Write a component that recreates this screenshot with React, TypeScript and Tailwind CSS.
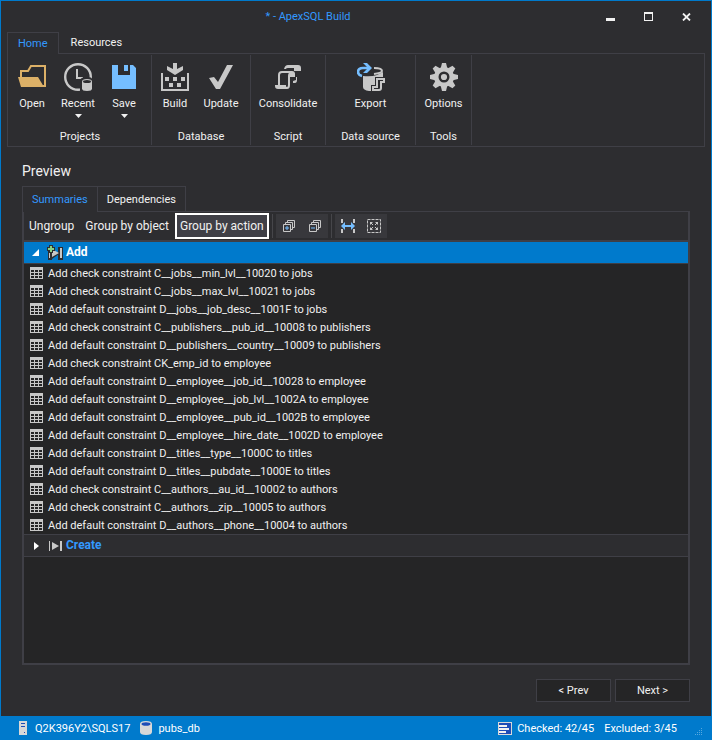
import { useState } from 'react';
import type { ReactNode } from 'react';
import clsx from 'clsx';

const constraints = [
  'Add check constraint C__jobs__min_lvl__10020 to jobs',
  'Add check constraint C__jobs__max_lvl__10021 to jobs',
  'Add default constraint D__jobs__job_desc__1001F to jobs',
  'Add check constraint C__publishers__pub_id__10008 to publishers',
  'Add default constraint D__publishers__country__10009 to publishers',
  'Add check constraint CK_emp_id to employee',
  'Add default constraint D__employee__job_id__10028 to employee',
  'Add default constraint D__employee__job_lvl__1002A to employee',
  'Add default constraint D__employee__pub_id__1002B to employee',
  'Add default constraint D__employee__hire_date__1002D to employee',
  'Add default constraint D__titles__type__1000C to titles',
  'Add default constraint D__titles__pubdate__1000E to titles',
  'Add check constraint C__authors__au_id__10002 to authors',
  'Add check constraint C__authors__zip__10005 to authors',
  'Add default constraint D__authors__phone__10004 to authors',
];

/* Ribbon icons, all on a 28px grid */
function RibbonIcon({ children }: { children: ReactNode }) {
  return (
    <svg width="28" height="28" viewBox="0 0 28 28" fill="#c8c8c8" aria-hidden="true" className="shrink-0">
      {children}
    </svg>
  );
}

const OpenIcon = () => (
  <RibbonIcon>
    <path d="M3 15V8H10L13 3H27V23H24" fill="none" stroke="#dcb067" strokeWidth="2" />
    <path d="M0 14H20L26 24H3Z" fill="#dcb067" />
  </RibbonIcon>
);

const RecentIcon = () => (
  <RibbonIcon>
    <circle cx="14" cy="14" r="12.8" fill="none" stroke="#c8c8c8" strokeWidth="2.4" />
    <path d="M13 6V15H19" fill="none" stroke="#c8c8c8" strokeWidth="2" />
    <path d="M16 28V18Q16 14 23 14Q28 14 28 16V28Z" fill="#2d2d30" />
    <path d="M18 18.5V25.5Q18 28 23 28Q28 28 28 25.5V18.5Q28 16 23 16Q18 16 18 18.5Z" />
    <ellipse cx="23" cy="18.6" rx="4" ry="1.5" fill="#2d2d30" />
  </RibbonIcon>
);

const SaveIcon = () => (
  <RibbonIcon>
    <path d="M2 2H8V12H20V2H23L26 5V26H2Z" fill="#75beff" />
    <path d="M14 2H18V8H14Z" fill="#75beff" />
  </RibbonIcon>
);

const BuildIcon = () => (
  <RibbonIcon>
    <path d="M1 10V27H27V10" fill="none" stroke="#c8c8c8" strokeWidth="2" />
    <path d="M12 0H16V6L22 3V7L14 12L6 7V3L12 6Z" />
    <path d="M4 14H8V18H4ZM12 14H16V18H12ZM20 14H24V18H20ZM8 20H12V24H8ZM16 20H20V24H16Z" />
  </RibbonIcon>
);

const UpdateIcon = () => (
  <RibbonIcon>
    <path d="M2 15L7 14L11 19L20 2H26L13 26H9Z" />
  </RibbonIcon>
);

const ConsolidateIcon = () => (
  <RibbonIcon>
    <path d="M10 6Q11 2 14 2H24Q27 2 27 5V8H20V5H14Q12 5 12 6Z" />
    <path d="M23 14H22V17L19 18V20H21Q23 20 23 17Z" />
    <path d="M5 22V12Q5 9 8 9H18Q15 10 15 13V22Q15 25 13 25H4Q2 25 2 23H11Q11 25 13 25" fill="none" stroke="#c8c8c8" strokeWidth="2" />
    <path d="M16 8H18Q21 8 21 11V14H16Z" />
  </RibbonIcon>
);

const ExportIcon = () => (
  <RibbonIcon>
    <path d="M6 13Q14 14 20 12L26 9V28H12Q6 27 6 24Z" />
    <path d="M17 5Q25 5 25 8Q25 10 17 11" fill="none" stroke="#c8c8c8" strokeWidth="2" />
    <path d="M16 22H18V14H28V28H14V22Z" fill="#2d2d30" />
    <path d="M20 23V16H27V19H24V25Q24 27 22 27H16V24H20Z" fill="none" stroke="#c8c8c8" strokeWidth="2" />
    <path d="M5 13Q1 12 1 9Q1 5 6 5H12" fill="none" stroke="#75beff" strokeWidth="2.6" />
    <path d="M6 0H10L15 5L10 10H6L10 6V4Z" fill="#75beff" />
  </RibbonIcon>
);

const OptionsIcon = () => (
  <RibbonIcon>
    {[0, 45, 90, 135, 180, 225, 270, 315].map((angle) => (
      <path key={angle} d="M10.5 6L12 0H16L17.5 6Z" transform={`rotate(${angle} 14 14)`} />
    ))}
    <circle cx="14" cy="14" r="10" />
    <circle cx="14" cy="14" r="4.3" fill="none" stroke="#2d2d30" strokeWidth="2.4" />
  </RibbonIcon>
);

const ribbonGroups = [
  {
    name: 'Projects',
    width: 'w-36 pl-px',
    items: [
      { label: 'Open', icon: <OpenIcon /> },
      { label: 'Recent', icon: <RecentIcon />, menu: true },
      { label: 'Save', icon: <SaveIcon />, menu: true },
    ],
  },
  {
    name: 'Database',
    width: 'w-[99px]',
    items: [
      { label: 'Build', icon: <BuildIcon /> },
      { label: 'Update', icon: <UpdateIcon /> },
    ],
  },
  { name: 'Script', width: 'w-[75px]', items: [{ label: 'Consolidate', icon: <ConsolidateIcon /> }] },
  { name: 'Data source', width: 'w-[90px]', items: [{ label: 'Export', icon: <ExportIcon /> }] },
  { name: 'Tools', width: 'w-14', items: [{ label: 'Options', icon: <OptionsIcon /> }] },
];

function TableIcon() {
  return (
    <svg width="13" height="12" viewBox="0 0 13 12" aria-hidden="true" className="shrink-0">
      <path d="M0 0H13V12H0Z" fill="#c8c8c8" />
      <path d="M1 3H4V5H1ZM5 3H8V5H5ZM9 3H12V5H9ZM1 6H4V8H1ZM5 6H8V8H5ZM9 6H12V8H9ZM1 9H4V11H1ZM5 9H8V11H5ZM9 9H12V11H9Z" fill="#252526" />
    </svg>
  );
}

function ActionIcon({ add = false }: { add?: boolean }) {
  return (
    <svg width="16" height="16" viewBox="0 0 16 16" aria-hidden="true" className="shrink-0">
      {add && <path d="M1 3H5V15H1ZM5 4L12 9L5 14ZM11 2H16V15H11Z" fill="#2d2d30" />}
      <path d="M2 3H3V13H2ZM13 3H15V13H13ZM5 4L12 8L5 12Z" fill="#c8c8c8" />
      {add && (
        <>
          <path d="M2 0H6V2H8V6H6V8H2V6H0V2H2Z" fill="#2d2d30" />
          <path d="M3 1H5V3H7V5H5V7H3V5H1V3H3Z" fill="#89d185" />
        </>
      )}
    </svg>
  );
}

function LayersIcon({ expand = false }: { expand?: boolean }) {
  return (
    <svg width="12" height="12" viewBox="0 0 12 12" fill="none" stroke="#c8c8c8" aria-hidden="true">
      <path d="M4.5 2V0.5H11.5V7.5H10M2.5 4V2.5H9.5V9.5H8M0.5 4.5H7.5V11.5H0.5Z" />
      <path d={expand ? 'M2 8H6M4 6V10' : 'M2 8H6'} stroke="#75beff" />
    </svg>
  );
}

function FitWidthIcon() {
  return (
    <svg width="16" height="16" viewBox="0 0 16 16" aria-hidden="true">
      <path d="M1 1H3V5H1ZM1 11H3V15H1ZM13 1H15V5H13ZM13 11H15V15H13Z" fill="#c8c8c8" />
      <path d="M1 8L5 4V7H11V4L15 8L11 12V9H5V12Z" fill="#75beff" />
    </svg>
  );
}

function FitAllIcon() {
  return (
    <svg width="14" height="14" viewBox="0 0 14 14" fill="none" stroke="#c8c8c8" aria-hidden="true">
      <rect x="0.5" y="0.5" width="13" height="13" strokeDasharray="3 1" />
      <path d="M3 6V3H6ZM8 3H11V6ZM3 8V11H6ZM11 8V11H8Z" fill="#c8c8c8" stroke="none" />
      <path d="M4 4L6 6M10 4L8 6M4 10L6 8M10 10L8 8" />
    </svg>
  );
}

function Separator() {
  return <div className="mx-0.5 h-6 w-px bg-[#46464a]" />;
}

export default function App() {
  const [ribbonTab, setRibbonTab] = useState('Home');
  const [previewTab, setPreviewTab] = useState('Summaries');
  const [grouping, setGrouping] = useState('Group by action');

  return (
    <div className="flex min-h-screen flex-col border-x border-t border-[#007acc] bg-[#2d2d30] font-[Roboto,sans-serif] text-[11px] leading-[17px] text-[#f1f1f1]">
      {/* Title bar */}
      <header className="flex h-[31px] items-center">
        <h1 className="flex-1 pl-3 text-center text-[#3399ff]">* - ApexSQL Build</h1>
        <div className="flex items-center gap-6 pr-[18px] text-[#f1f1f1]">
          <button aria-label="Minimize" className="flex h-4 w-3.5 items-center justify-center">
            <svg width="9" height="10" viewBox="0 0 9 10"><path d="M0 6H9V9H0Z" fill="currentColor" /></svg>
          </button>
          <button aria-label="Maximize" className="flex h-4 w-3.5 items-center justify-center">
            <svg width="9" height="9" viewBox="0 0 9 9"><path d="M0 0H9V9H0ZM1 2V8H8V2Z" fill="currentColor" fillRule="evenodd" /></svg>
          </button>
          <button aria-label="Close" className="flex h-4 w-3.5 items-center justify-center">
            <svg width="9" height="8" viewBox="0 0 9 8"><path d="M1 0.5L8 7.5M8 0.5L1 7.5" stroke="currentColor" strokeWidth="1.8" /></svg>
          </button>
        </div>
      </header>

      {/* Ribbon */}
      <div className="mx-1.5">
        <div className="flex h-[22px]">
          {['Home', 'Resources'].map((tab) => (
            <button
              key={tab}
              onClick={() => setRibbonTab(tab)}
              className={clsx(
                'border-[#3f3f46]',
                ribbonTab === tab ? 'border-x border-t px-2.5 text-[#3399ff]' : 'border-b px-3',
              )}
            >
              {tab}
            </button>
          ))}
          <div className="flex-1 border-b border-[#3f3f46]" />
        </div>
        <div className="flex h-[93px] border-x border-b border-[#3f3f46] py-px">
          {ribbonGroups.map((group) => (
            <section key={group.name} className={clsx('flex flex-col border-r border-[#3f3f46] pt-2', group.width)}>
              <div className="flex flex-1">
                {group.items.map((item) => (
                  <button
                    key={item.label}
                    className={clsx('flex flex-col items-center', group.items.length > 1 ? 'w-[46px]' : 'flex-1')}
                  >
                    {item.icon}
                    <span className="mt-1">{item.label}</span>
                    {'menu' in item && (
                      <svg width="7" height="4" viewBox="0 0 7 4" aria-hidden="true" className="mt-0.5">
                        <path d="M0 0H7L3.5 4Z" fill="#f1f1f1" />
                      </svg>
                    )}
                  </button>
                ))}
              </div>
              <h2 className="text-center">{group.name}</h2>
            </section>
          ))}
        </div>
      </div>

      {/* Preview */}
      <main className="mx-[21px] flex flex-1 flex-col pb-3.5">
        <h2 className="mt-3.5 text-sm leading-5">Preview</h2>
        <div className="mt-[5px] flex h-[26px]">
          {['Summaries', 'Dependencies'].map((tab) => (
            <button
              key={tab}
              onClick={() => setPreviewTab(tab)}
              className={clsx(
                'border-r border-t border-[#3f3f46] px-[9px] first:border-l',
                previewTab === tab ? 'text-[#3399ff]' : 'border-b',
              )}
            >
              {tab}
            </button>
          ))}
          <div className="flex-1 border-b border-[#3f3f46]" />
        </div>

        <div className="flex flex-1 flex-col border-x-2 border-b-2 border-[#3f3f46]">
          <div className="flex h-[28px] items-center gap-px text-xs">
            {['Ungroup', 'Group by object', 'Group by action'].map((mode) => (
              <button
                key={mode}
                onClick={() => setGrouping(mode)}
                className={clsx(
                  'h-[26px] whitespace-nowrap',
                  grouping === mode ? 'border-2 border-white bg-[#3f3f46] px-[3px]' : 'px-[5px]',
                )}
              >
                {mode}
              </button>
            ))}
            <Separator />
            <div className="flex h-6 bg-[#38383c]">
              <button aria-label="Expand all" className="flex w-[26px] items-center justify-center"><LayersIcon expand /></button>
              <button aria-label="Collapse all" className="flex w-[26px] items-center justify-center"><LayersIcon /></button>
            </div>
            <Separator />
            <div className="flex h-6 bg-[#38383c]">
              <button aria-label="Fit width" className="flex w-[26px] items-center justify-center"><FitWidthIcon /></button>
              <button aria-label="Best fit" className="flex w-[26px] items-center justify-center"><FitAllIcon /></button>
            </div>
          </div>

          <div className="flex-1 border-t-2 border-[#3f3f46] bg-[#252526]">
            <button className="flex h-[22px] w-full items-center border-b border-[#3f3f46] bg-[#007acc] pl-2 text-xs leading-[17px] font-bold text-white">
              <svg width="7" height="7" viewBox="0 0 7 7" aria-hidden="true" className="mr-2"><path d="M7 0V7H0Z" fill="white" /></svg>
              <ActionIcon add />
              <span className="ml-[3px]">Add</span>
            </button>
            <ul>
              {constraints.map((text) => (
                <li key={text} className="flex h-[18px] items-center gap-[5px] pl-1.5">
                  <TableIcon />
                  <span className="whitespace-nowrap">{text}</span>
                </li>
              ))}
            </ul>
            <button className="flex h-[23px] w-full items-center border-y border-[#3f3f46] bg-[#2d2d30] pl-2.5 text-xs leading-[17px] font-bold text-[#3399ff]">
              <svg width="5" height="8" viewBox="0 0 5 8" aria-hidden="true" className="mr-2"><path d="M0 0L5 4L0 8Z" fill="white" /></svg>
              <ActionIcon />
              <span className="ml-[3px]">Create</span>
            </button>
          </div>
        </div>

        <div className="mt-3.5 flex justify-end gap-1">
          {['< Prev', 'Next >'].map((label) => (
            <button key={label} className="h-[23px] w-[75px] border border-[#3f3f46] bg-[#252526]">
              {label}
            </button>
          ))}
        </div>
      </main>

      {/* Status bar */}
      <footer className="flex h-6 items-center bg-[#007acc] pl-[18px] text-white">
        <svg width="8" height="14" viewBox="0 0 8 14" aria-hidden="true">
          <path d="M0 0H8V14H0Z" fill="#d8d8d8" />
          <path d="M2 2H6V3H2ZM2 5H6V6H2ZM5 11H6V12H5Z" fill="#1e4db7" />
        </svg>
        <span className="ml-2">Q2K396Y2\SQLS17</span>
        <svg width="12" height="14" viewBox="0 0 12 14" aria-hidden="true" className="ml-2.5">
          <path d="M0 3Q0 0 6 0Q12 0 12 3V11Q12 14 6 14Q0 14 0 11Z" fill="#d8d8d8" />
          <ellipse cx="6" cy="3" rx="4.5" ry="1.8" fill="#1e4db7" />
        </svg>
        <span className="ml-1.5">pubs_db</span>
        <div className="flex-1" />
        <svg width="14" height="13" viewBox="0 0 14 13" aria-hidden="true">
          <path d="M0 0H14V13H0Z" fill="#d8d8d8" />
          <path d="M1 1H13V12H1Z" fill="#1e4db7" />
          <path d="M1 3H9V5H1ZM1 6H11V8H1ZM1 9H8V11H1Z" fill="#f1f1f1" />
        </svg>
        <span className="ml-[5px]">Checked: 42/45</span>
        <span className="ml-2.5">Excluded: 3/45</span>
        <svg width="8" height="8" viewBox="0 0 8 8" fill="#55a8e0" aria-hidden="true" className="ml-[18px] mr-2 mb-1 self-end">
          <path d="M6 0H7V1H6ZM4 2H5V3H4ZM6 2H7V3H6ZM2 4H3V5H2ZM4 4H5V5H4ZM6 4H7V5H6ZM0 6H1V7H0ZM2 6H3V7H2ZM4 6H5V7H4ZM6 6H7V7H6Z" />
        </svg>
      </footer>
    </div>
  );
}
